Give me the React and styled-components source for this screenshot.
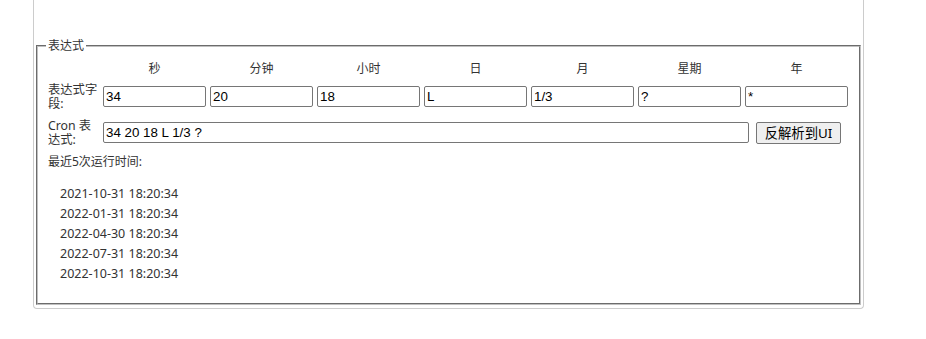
import React from "react";
import styled, { createGlobalStyle } from "styled-components";

const GlobalStyle = createGlobalStyle`
  html, body { margin: 0; padding: 0; background: #fff; }
  body {
    font-family: "Noto Sans", "Noto Sans CJK SC", sans-serif;
    font-size: 12px;
    color: #333;
  }
`;

const Panel = styled.div`
  margin-left: 33px;
  width: 831px;
  box-sizing: border-box;
  border: 1px solid #ccc;
  border-top: none;
  border-radius: 0 0 4px 4px;
  padding: 38px 0 3px;
`;

const Fieldset = styled.fieldset`
  margin: 0 2px;
  padding: 2px 8px 8px;
  border: 2px groove #c0c0c0;
  min-width: 0;
`;

const Legend = styled.legend`
  padding: 0 2px;
  font-size: 12px;
  line-height: 16px;
  color: #333;
`;

const Row = styled.div`
  display: grid;
  grid-template-columns: 55px repeat(7, 107px);
  align-items: center;
  height: ${(p) => p.$h || 28}px;
  margin-top: ${(p) => p.$mt || 0}px;
`;

const HeadCell = styled.div`
  text-align: center;
  line-height: 26px;
  color: #333;
`;

const Label = styled.div`
  padding: 1px 2px 0;
  line-height: 14px;
  font-size: 12.3px;
  color: #333;
`;

const Cell = styled.div`
  padding: 0 2px;
  display: flex;
  align-items: center;
  gap: 7px;
  grid-column: ${(p) => p.$span || "auto"};
`;

const Input = styled.input`
  box-sizing: border-box;
  width: ${(p) => (p.$w ? `${p.$w}px` : "100%")};
  height: 21px;
  margin: 0;
  padding: 1px 2px;
  border: 1px solid #767676;
  border-radius: 2px;
  font-family: "Liberation Sans", Arial, sans-serif;
  font-size: 13.333px;
  color: #000;
  background: #fff;
  outline: none;
`;

const Button = styled.button`
  box-sizing: border-box;
  width: 85px;
  height: 22px;
  margin: 0;
  padding: 0 4px;
  border: 1px solid #767676;
  border-radius: 2px;
  background: #efefef;
  font-family: "Noto Sans", "Noto Sans CJK SC", sans-serif;
  font-size: 13.333px;
  line-height: 18px;
  color: #000;
  white-space: nowrap;
`;

const Caption = styled.div`
  margin-top: 8px;
  padding-left: 2px;
  line-height: 16px;
  color: #333;
`;

const DateList = styled.ul`
  list-style: none;
  margin: 14px 0 11px;
  padding: 0 0 0 14px;
`;

const DateItem = styled.li`
  line-height: 20px;
  font-size: 12.5px;
  color: #333;
`;

const headers = ["秒", "分钟", "小时", "日", "月", "星期", "年"];
const values = ["34", "20", "18", "L", "1/3", "?", "*"];
const dates = [
  "2021-10-31 18:20:34",
  "2022-01-31 18:20:34",
  "2022-04-30 18:20:34",
  "2022-07-31 18:20:34",
  "2022-10-31 18:20:34",
];

export default function App() {
  return (
    <>
      <GlobalStyle />
      <Panel>
        <Fieldset>
          <Legend>表达式</Legend>
          <Row $h={26}>
            <div />
            {headers.map((h) => (
              <HeadCell key={h}>{h}</HeadCell>
            ))}
          </Row>
          <Row $h={28}>
            <Label>表达式字段:</Label>
            {values.map((v, i) => (
              <Cell key={i}>
                <Input defaultValue={v} />
              </Cell>
            ))}
          </Row>
          <Row $h={28} $mt={8}>
            <Label>Cron 表达式:</Label>
            <Cell $span="2 / span 7">
              <Input $w={646} defaultValue="34 20 18 L 1/3 ?" />
              <Button>反解析到UI</Button>
            </Cell>
          </Row>
          <Caption>最近5次运行时间:</Caption>
          <DateList>
            {dates.map((d) => (
              <DateItem key={d}>{d}</DateItem>
            ))}
          </DateList>
        </Fieldset>
      </Panel>
    </>
  );
}
